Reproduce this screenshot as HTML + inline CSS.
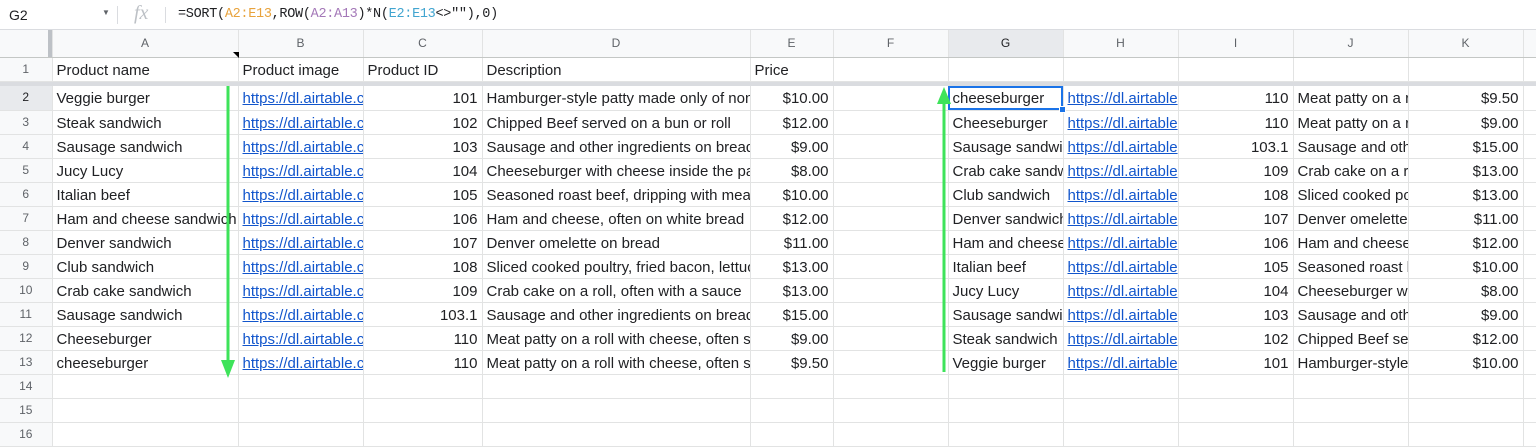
<!DOCTYPE html>
<html><head><meta charset="utf-8"><style>
*{box-sizing:border-box;margin:0;padding:0}
body{width:1536px;height:434px;overflow:hidden;background:#fff;font-family:"Liberation Sans",Arial,sans-serif;position:relative}
#fb{position:absolute;left:0;top:0;width:1536px;height:30px;border-bottom:1px solid #dadce0;font-size:14px;color:#202124}
#fb .nm{position:absolute;left:9px;top:7px}
#fb .dd{position:absolute;left:102px;top:8px;font-size:8px;color:#5f6368}
#fb .s1{position:absolute;left:117px;top:6px;width:1px;height:18px;background:#dadce0}
#fb .fx{position:absolute;left:134px;top:2px;font-family:"Liberation Serif",serif;font-style:italic;font-size:20px;color:#bdc1c6}
#fb .s2{position:absolute;left:165px;top:7px;width:1px;height:16px;background:#dadce0}
#fb .f{position:absolute;left:178px;top:7px;font-family:"Liberation Mono",monospace;font-size:13.5px;color:#202124;letter-spacing:-0.3px}
table{position:absolute;left:0;top:30px;width:1536px;border-collapse:collapse;table-layout:fixed;font-size:15px;color:#202124}
tr{height:24px}
td{border-right:1px solid #e2e3e3;border-bottom:1px solid #e2e3e3;height:24px;white-space:nowrap;overflow:hidden;padding:3px 4px 0;line-height:20px;vertical-align:top}
tr.h{height:27px}
tr.h td{height:27px;background:#f8f9fa;color:#5f6368;text-align:center;font-size:12px;border-bottom:1px solid #c4c7c5;padding:0;line-height:26px}
td.r{background:#f8f9fa;color:#5f6368;text-align:center;font-size:12px;padding:0;line-height:23px}
tr.sep{height:5px}
tr.sep td{height:5px;line-height:5px;padding:0;background:#dadce0;border:none}
td.n{text-align:right}
td a{color:#1155cc;text-decoration:underline}
.selh{background:#e8eaed!important;color:#202124!important}
</style></head><body>
<div id="fb"><span class="nm">G2</span><span class="dd">▼</span><div class="s1"></div><span class="fx">fx</span><div class="s2"></div>
<span class="f">=SORT(<span style="color:#e8a33d">A2:E13</span>,ROW(<span style="color:#a478b8">A2:A13</span>)*N(<span style="color:#42a5d0">E2:E13</span>&lt;&gt;""),0)</span></div>
<table>
<colgroup><col style="width:52px"><col style="width:186px"><col style="width:125px"><col style="width:119px"><col style="width:268px"><col style="width:83px"><col style="width:115px"><col style="width:115px"><col style="width:115px"><col style="width:115px"><col style="width:115px"><col style="width:115px"><col style="width:13px"></colgroup>
<tr class="h"><td></td><td>A</td><td>B</td><td>C</td><td>D</td><td>E</td><td>F</td><td class="selh">G</td><td>H</td><td>I</td><td>J</td><td>K</td><td></td></tr>
<tr><td class="r">1</td><td>Product name</td><td>Product image</td><td>Product ID</td><td>Description</td><td>Price</td><td></td><td></td><td></td><td></td><td></td><td></td><td></td></tr>
<tr class="sep"><td></td><td></td><td></td><td></td><td></td><td></td><td></td><td></td><td></td><td></td><td></td><td></td><td></td></tr>
<tr><td class="r selh">2</td><td>Veggie burger</td><td><a>https://dl.airtable.c</a></td><td class="n">101</td><td>Hamburger-style patty made only of non</td><td class="n">$10.00</td><td></td><td style="outline:2px solid #1a73e8;outline-offset:-2px">cheeseburger</td><td><a>https://dl.airtable</a></td><td class="n">110</td><td>Meat patty on a ro</td><td class="n">$9.50</td><td></td></tr>
<tr><td class="r">3</td><td>Steak sandwich</td><td><a>https://dl.airtable.c</a></td><td class="n">102</td><td>Chipped Beef served on a bun or roll</td><td class="n">$12.00</td><td></td><td>Cheeseburger</td><td><a>https://dl.airtable</a></td><td class="n">110</td><td>Meat patty on a ro</td><td class="n">$9.00</td><td></td></tr>
<tr><td class="r">4</td><td>Sausage sandwich</td><td><a>https://dl.airtable.c</a></td><td class="n">103</td><td>Sausage and other ingredients on bread</td><td class="n">$9.00</td><td></td><td>Sausage sandwich</td><td><a>https://dl.airtable</a></td><td class="n">103.1</td><td>Sausage and other</td><td class="n">$15.00</td><td></td></tr>
<tr><td class="r">5</td><td>Jucy Lucy</td><td><a>https://dl.airtable.c</a></td><td class="n">104</td><td>Cheeseburger with cheese inside the pat</td><td class="n">$8.00</td><td></td><td>Crab cake sandwich</td><td><a>https://dl.airtable</a></td><td class="n">109</td><td>Crab cake on a rol</td><td class="n">$13.00</td><td></td></tr>
<tr><td class="r">6</td><td>Italian beef</td><td><a>https://dl.airtable.c</a></td><td class="n">105</td><td>Seasoned roast beef, dripping with meat</td><td class="n">$10.00</td><td></td><td>Club sandwich</td><td><a>https://dl.airtable</a></td><td class="n">108</td><td>Sliced cooked pou</td><td class="n">$13.00</td><td></td></tr>
<tr><td class="r">7</td><td style="padding-right:0">Ham and cheese sandwich</td><td><a>https://dl.airtable.c</a></td><td class="n">106</td><td>Ham and cheese, often on white bread</td><td class="n">$12.00</td><td></td><td>Denver sandwich</td><td><a>https://dl.airtable</a></td><td class="n">107</td><td>Denver omelette o</td><td class="n">$11.00</td><td></td></tr>
<tr><td class="r">8</td><td>Denver sandwich</td><td><a>https://dl.airtable.c</a></td><td class="n">107</td><td>Denver omelette on bread</td><td class="n">$11.00</td><td></td><td>Ham and cheese</td><td><a>https://dl.airtable</a></td><td class="n">106</td><td>Ham and cheese, o</td><td class="n">$12.00</td><td></td></tr>
<tr><td class="r">9</td><td>Club sandwich</td><td><a>https://dl.airtable.c</a></td><td class="n">108</td><td>Sliced cooked poultry, fried bacon, lettuce</td><td class="n">$13.00</td><td></td><td>Italian beef</td><td><a>https://dl.airtable</a></td><td class="n">105</td><td>Seasoned roast be</td><td class="n">$10.00</td><td></td></tr>
<tr><td class="r">10</td><td>Crab cake sandwich</td><td><a>https://dl.airtable.c</a></td><td class="n">109</td><td>Crab cake on a roll, often with a sauce</td><td class="n">$13.00</td><td></td><td>Jucy Lucy</td><td><a>https://dl.airtable</a></td><td class="n">104</td><td>Cheeseburger with</td><td class="n">$8.00</td><td></td></tr>
<tr><td class="r">11</td><td>Sausage sandwich</td><td><a>https://dl.airtable.c</a></td><td class="n">103.1</td><td>Sausage and other ingredients on bread</td><td class="n">$15.00</td><td></td><td>Sausage sandwich</td><td><a>https://dl.airtable</a></td><td class="n">103</td><td>Sausage and other</td><td class="n">$9.00</td><td></td></tr>
<tr><td class="r">12</td><td>Cheeseburger</td><td><a>https://dl.airtable.c</a></td><td class="n">110</td><td>Meat patty on a roll with cheese, often se</td><td class="n">$9.00</td><td></td><td>Steak sandwich</td><td><a>https://dl.airtable</a></td><td class="n">102</td><td>Chipped Beef serv</td><td class="n">$12.00</td><td></td></tr>
<tr><td class="r">13</td><td>cheeseburger</td><td><a>https://dl.airtable.c</a></td><td class="n">110</td><td>Meat patty on a roll with cheese, often se</td><td class="n">$9.50</td><td></td><td>Veggie burger</td><td><a>https://dl.airtable</a></td><td class="n">101</td><td>Hamburger-style p</td><td class="n">$10.00</td><td></td></tr>
<tr><td class="r">14</td><td></td><td></td><td></td><td></td><td></td><td></td><td></td><td></td><td></td><td></td><td></td><td></td></tr>
<tr><td class="r">15</td><td></td><td></td><td></td><td></td><td></td><td></td><td></td><td></td><td></td><td></td><td></td><td></td></tr>
<tr><td class="r">16</td><td></td><td></td><td></td><td></td><td></td><td></td><td></td><td></td><td></td><td></td><td></td><td></td></tr>
</table>
<div style="position:absolute;left:48px;top:30px;width:4px;height:27px;background:#bdc1c6"></div>
<div style="position:absolute;left:233px;top:52px;width:0;height:0;border-left:6px solid transparent;border-top:6px solid #000"></div>
<div style="position:absolute;left:1059px;top:106px;width:7px;height:7px;background:#1a73e8;border:1px solid #fff"></div>
<svg style="position:absolute;left:0;top:0" width="1536" height="434">
<line x1="228" y1="86" x2="228" y2="364" stroke="#3ee35a" stroke-width="3"/>
<polygon points="221,360 235,360 228,378" fill="#3ee35a"/>
<line x1="944" y1="372" x2="944" y2="100" stroke="#3ee35a" stroke-width="3"/>
<polygon points="937,104 951,104 944,87" fill="#3ee35a"/>
</svg>
</body></html>
